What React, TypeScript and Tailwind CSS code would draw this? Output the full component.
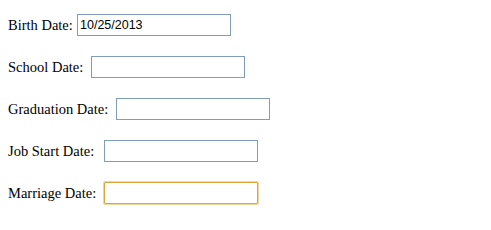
import React from "react";

const rows: { label: string; w: string; value?: string; focus?: boolean }[] = [
  { label: "Birth Date:", w: "w-[69px]", value: "10/25/2013" },
  { label: "School Date:", w: "w-[83px]" },
  { label: "Graduation Date:", w: "w-[108px]" },
  { label: "Job Start Date:", w: "w-[96px]" },
  { label: "Marriage Date:", w: "w-[96px]", focus: true },
];

export default function App() {
  return (
    <div className="w-[491px] h-[230px] bg-white px-2 pt-[14px] flex flex-col gap-[20px] font-['Liberation_Serif',serif] text-[14.5px] text-black">
      {rows.map((r) => (
        <div key={r.label} className="flex items-center h-[22px] leading-none">
          <span className={`whitespace-nowrap shrink-0 ${r.w}`}>{r.label}</span>
          <input
            readOnly
            defaultValue={r.value ?? ""}
            className={
              r.focus
                ? "w-[154px] h-[22px] px-[2px] border border-[#d6a83e] shadow-[0_0_0_1px_#f1d89a] rounded-[1px] outline-none font-['Liberation_Sans',sans-serif] text-[12.5px] text-black"
                : "w-[154px] h-[22px] px-[2px] border border-[#7f9db9] outline-none font-['Liberation_Sans',sans-serif] text-[12.5px] text-black"
            }
          />
        </div>
      ))}
    </div>
  );
}
